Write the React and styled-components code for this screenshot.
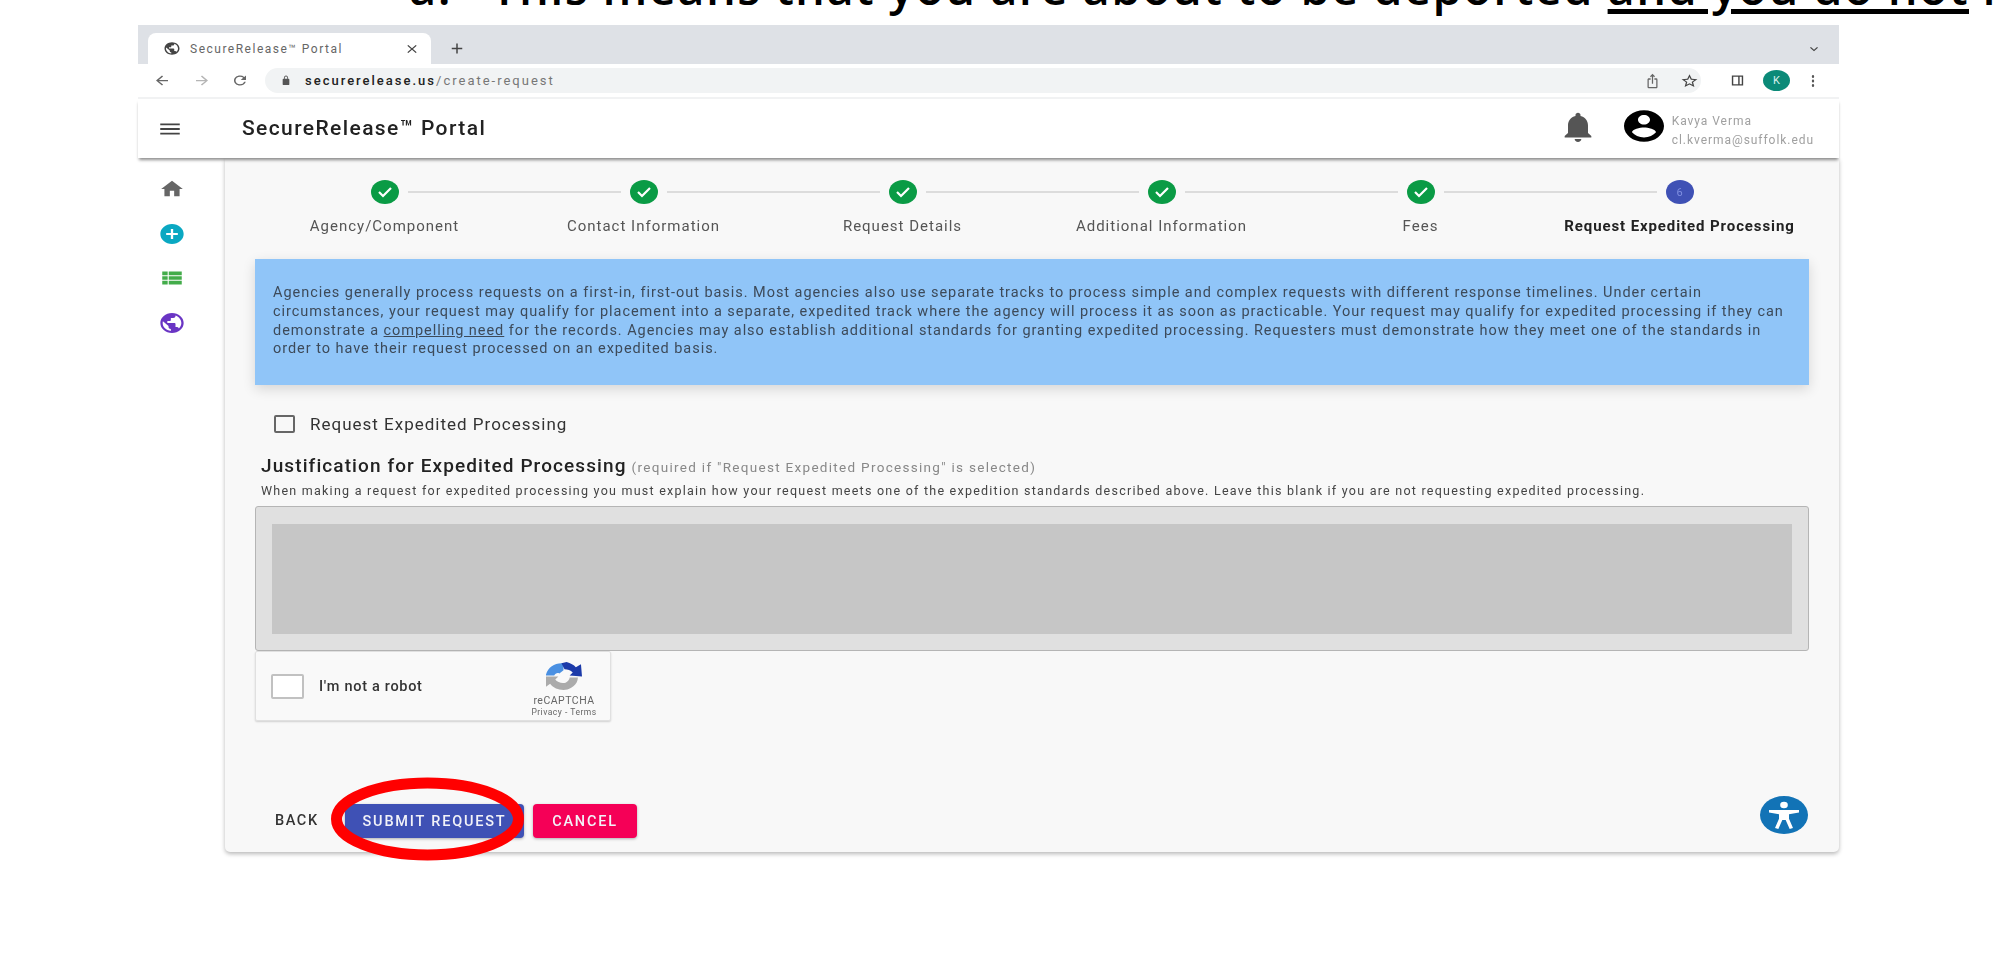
import React from "react"
import styled, { createGlobalStyle } from "styled-components"

const GlobalStyle = createGlobalStyle`
  html, body {
    margin: 0;
    padding: 0;
    background: #fff;
    overflow: hidden;
  }
  * { box-sizing: border-box; }
`

const Page = styled.div`
  width: 2000px;
  height: 970px;
  overflow: hidden;
  background: #fff;
  font-family: Roboto, "Liberation Sans", sans-serif;
`

const Caption = styled.div`
  height: 25px;
  overflow: hidden;
  padding-left: 409px;
  white-space: nowrap;
  font-family: "Open Sans", "Noto Sans", sans-serif;
  font-size: 47px;
  font-weight: 600;
  letter-spacing: 1.4px;
  line-height: 60px;
  color: #000;
  display: flex;
  align-items: flex-start;
`

const CaptionLine = styled.div`
  margin-top: -43px;
  display: flex;
`

const CaptionMark = styled.span`
  width: 82px;
`

const CaptionStrong = styled.span`
  text-decoration: underline;
  text-decoration-thickness: 5px;
  text-underline-offset: 4px;
`

const Window = styled.div`
  margin-left: 138px;
  width: 1701px;
  height: 827px;
  filter: blur(0.7px);
`

const TabStrip = styled.div`
  height: 39px;
  background: #dee1e6;
  padding: 8px 17px 0 10px;
  display: flex;
  align-items: stretch;
`

const Tab = styled.div`
  width: 283px;
  background: #fff;
  border-radius: 8px 8px 0 0;
  padding: 0 11px 0 15px;
  display: flex;
  align-items: center;
  gap: 9px;
  font-size: 12px;
  letter-spacing: 1.5px;
  color: #666;
  white-space: nowrap;
`

const TabTitle = styled.span`
  flex: 1;
`

const TabPlus = styled.div`
  margin-left: 17px;
  width: 18px;
  display: flex;
  align-items: center;
`

const TabChevron = styled.div`
  margin-left: auto;
  display: flex;
  align-items: center;
`

const Toolbar = styled.div`
  height: 35px;
  background: #fff;
  border-bottom: 2px solid #f1f2f3;
  padding: 4px 0 4px 15px;
  display: flex;
  align-items: center;
`

const NavButton = styled.div`
  width: ${(p) => p.$w}px;
  margin-left: ${(p) => p.$ml || 0}px;
  display: flex;
  align-items: center;
`

const Omnibox = styled.div`
  width: 1436px;
  height: 25px;
  margin-left: 14px;
  background: #f1f3f4;
  border-radius: 13px;
  padding: 0 2px 0 16px;
  display: flex;
  align-items: center;
  font-size: 13px;
  letter-spacing: 2px;
  color: #777;
  white-space: nowrap;
`

const Host = styled.span`
  color: #222;
  font-weight: 500;
  margin-left: 14px;
`

const OmniActions = styled.div`
  margin-left: auto;
  display: flex;
  align-items: center;
  gap: 20px;
`

const Avatar = styled.div`
  width: 27px;
  height: 21px;
  border-radius: 50%;
  background: #0b8a78;
  color: #d8f0ec;
  font-size: 11px;
  display: flex;
  align-items: center;
  justify-content: center;
  margin-left: 16px;
  margin-right: 16px;
`

const AppBar = styled.header`
  height: 59px;
  background: #fff;
  padding: 0 25px 0 19px;
  display: flex;
  align-items: center;
  box-shadow: 0 3px 3px -1px rgba(0, 0, 0, 0.45);
  position: relative;
  z-index: 2;
`

const AppTitle = styled.div`
  margin-left: 59px;
  margin-bottom: 1px;
  font-size: 21px;
  font-weight: 500;
  letter-spacing: 1.4px;
  color: #222;
  white-space: nowrap;
`

const AppUser = styled.div`
  margin-left: auto;
  display: flex;
  align-items: center;
`

const BellIcon = styled.div`
  margin-bottom: 4px;
  display: flex;
`

const UserIcon = styled.div`
  margin-left: 22px;
  margin-bottom: 5px;
  display: flex;
`

const UserText = styled.div`
  margin-left: 4px;
  display: flex;
  flex-direction: column;
  gap: 6px;
  font-size: 12px;
  line-height: 13px;
  letter-spacing: 0.95px;
  color: #a0a0a0;
  padding-top: 4px;
  white-space: nowrap;
`

const Body = styled.div`
  display: flex;
  height: 694px;
`

const Sidebar = styled.nav`
  width: 87px;
  flex: none;
  background: #fff;
  padding: 9px 20px 0 0;
  display: flex;
  flex-direction: column;
  align-items: center;
`

const SideItem = styled.div`
  height: 44.5px;
  display: flex;
  align-items: center;
  justify-content: center;
`

const Main = styled.main`
  flex: 1;
  min-width: 0;
  background: #f8f8f8;
  border-radius: 0 0 5px 5px;
  box-shadow: 0 2px 4px rgba(0, 0, 0, 0.28);
  padding: 22px 30px 0;
  display: flex;
  flex-direction: column;
`

const Stepper = styled.div`
  display: grid;
  grid-template-columns: repeat(6, 1fr);
`

const Step = styled.div`
  display: flex;
  flex-direction: column;
  align-items: center;
`

const StepTrack = styled.div`
  width: 100%;
  height: 24px;
  display: flex;
  align-items: center;
`

const Connector = styled.div`
  flex: 1;
  height: 2px;
  background: ${(p) => (p.$hidden ? "transparent" : "#dcdcdc")};
`

const StepDot = styled.div`
  width: 28px;
  height: 24px;
  margin: 0 9px;
  flex: none;
  border-radius: 50%;
  background: ${(p) => (p.$active ? "#3f51b5" : "#0a9b45")};
  color: #7f8fe0;
  font-size: 11px;
  display: flex;
  align-items: center;
  justify-content: center;
`

const StepLabel = styled.div`
  margin-top: 13px;
  font-size: 15px;
  line-height: 18px;
  letter-spacing: ${(p) => (p.$active ? 0.9 : 1)}px;
  white-space: nowrap;
  color: ${(p) => (p.$active ? "#222" : "#555")};
  font-weight: ${(p) => (p.$active ? 700 : 400)};
`

const InfoBox = styled.div`
  margin-top: 24px;
  height: 126px;
  background: #90c5f8;
  box-shadow: 0 4px 12px rgba(0, 0, 0, 0.14);
  padding: 25px 18px 0;
  font-size: 14.5px;
  line-height: 18.8px;
  letter-spacing: 0.96px;
  white-space: nowrap;
  color: #3d4a59;
`

const CheckRow = styled.div`
  margin-top: 30px;
  padding-left: 19px;
  display: flex;
  align-items: center;
  gap: 15px;
  font-size: 17px;
  line-height: 18px;
  letter-spacing: 1px;
  color: #333;
`

const CheckBox = styled.div`
  width: 21px;
  height: 18px;
  border: 2px solid #666;
  border-radius: 2px;
`

const FieldTitle = styled.div`
  margin-top: 22px;
  padding-left: 6px;
  white-space: nowrap;
  font-size: 19px;
  line-height: 22px;
  font-weight: 500;
  letter-spacing: 1.1px;
  color: #222;
`

const FieldHint = styled.span`
  margin-left: 5px;
  font-size: 13.5px;
  font-weight: 400;
  letter-spacing: 1.3px;
  color: #888;
`

const FieldHelp = styled.div`
  margin-top: 6px;
  padding-left: 6px;
  white-space: nowrap;
  font-size: 12.5px;
  line-height: 14px;
  letter-spacing: 1.24px;
  color: #444;
`

const TextArea = styled.div`
  margin-top: 8px;
  height: 145px;
  background: #e0e0e0;
  border: 1px solid #b5b5b5;
  border-radius: 3px;
  padding: 17px 16px;
`

const TextAreaFill = styled.div`
  height: 110px;
  background: #c6c6c6;
`

const Captcha = styled.div`
  width: 356px;
  height: 70px;
  background: #f9f9f9;
  border: 1px solid #e0e0e0;
  box-shadow: 0 1px 2px rgba(0, 0, 0, 0.16);
  border-radius: 2px;
  padding: 0 7px 0 15px;
  display: flex;
  align-items: center;
`

const CaptchaBox = styled.div`
  width: 33px;
  height: 25px;
  background: #fff;
  border: 2px solid #c1c1c1;
  border-radius: 2px;
`

const CaptchaText = styled.div`
  margin-left: 15px;
  font-size: 14.5px;
  font-weight: 500;
  letter-spacing: 0.7px;
  color: #333;
`

const CaptchaBrand = styled.div`
  margin-left: auto;
  width: 78px;
  align-self: flex-start;
  display: flex;
  flex-direction: column;
  align-items: center;
  padding-top: 10px;
  font-size: 10.5px;
  line-height: 12px;
  letter-spacing: 0.5px;
  color: #666;
  white-space: nowrap;
`

const CaptchaName = styled.div`
  margin-top: 5px;
`

const CaptchaTerms = styled.div`
  font-size: 8.5px;
  line-height: 11px;
`

const Actions = styled.div`
  margin-top: auto;
  margin-bottom: 14px;
  display: flex;
  align-items: flex-end;
`

const BackButton = styled.div`
  margin-left: 20px;
  width: 70px;
  height: 34px;
  line-height: 34px;
  font-size: 14.5px;
  font-weight: 500;
  letter-spacing: 1.6px;
  color: #333;
`

const SubmitWrap = styled.div`
  position: relative;
`

const ActionButton = styled.div`
  height: 34px;
  width: ${(p) => p.$w}px;
  margin-right: 9px;
  background: ${(p) => p.$color};
  border-radius: 4px;
  box-shadow: 0 1px 3px rgba(0, 0, 0, 0.3);
  display: flex;
  align-items: center;
  justify-content: center;
  font-size: 14.5px;
  font-weight: 500;
  letter-spacing: 1.8px;
  color: #f2f2f8;
  white-space: nowrap;
`

const Ring = styled.svg`
  position: absolute;
  left: -15px;
  top: -27px;
  width: 195px;
  height: 84px;
  pointer-events: none;
`

const A11yBadge = styled.div`
  margin-left: auto;
  margin-right: 1px;
  margin-bottom: 4px;
  width: 48px;
  height: 38px;
  border-radius: 50%;
  background: #1273b6;
  display: flex;
  align-items: center;
  justify-content: center;
`

const Ico = ({ w, h, d, color = "currentColor" }) => (
  <svg width={w} height={h} viewBox="0 0 24 24" preserveAspectRatio="none" fill={color}>
    <path d={d} />
  </svg>
)

const icons = {
  home: "M10 20v-6h4v6h5v-8h3L12 3 2 12h3v8z",
  add: "M12 2C6.48 2 2 6.48 2 12s4.48 10 10 10 10-4.48 10-10S17.52 2 12 2zm5 11h-4v4h-2v-4H7v-2h4V7h2v4h4v2z",
  list: "M3 14h5v-4H3v4zm0 5h5v-4H3v4zM3 9h5V5H3v4zm6 5h12v-4H9v4zm0 5h12v-4H9v4zM9 5v4h12V5H9z",
  globe: "M12 2C6.48 2 2 6.48 2 12s4.48 10 10 10 10-4.48 10-10S17.52 2 12 2zm-1 17.93c-3.95-.49-7-3.85-7-7.93 0-.62.08-1.21.21-1.79L9 15v1c0 1.1.9 2 2 2v1.93zm6.9-2.54c-.26-.81-1-1.39-1.9-1.39h-1v-3c0-.55-.45-1-1-1H8v-2h2c.55 0 1-.45 1-1V7h2c1.1 0 2-.9 2-2v-.41c2.93 1.19 5 4.06 5 7.41 0 2.08-.8 3.97-2.1 5.39z",
  bell: "M12 22c1.1 0 2-.9 2-2h-4c0 1.1.89 2 2 2zm6-6v-5c0-3.07-1.64-5.64-4.5-6.32V4c0-.83-.67-1.5-1.5-1.5s-1.5.67-1.5 1.5v.68C7.63 5.36 6 7.92 6 11v5l-2 2v1h16v-1l-2-2z",
  account: "M12 2C6.48 2 2 6.48 2 12s4.48 10 10 10 10-4.48 10-10S17.52 2 12 2zm0 3c1.66 0 3 1.34 3 3s-1.34 3-3 3-3-1.34-3-3 1.34-3 3-3zm0 14.2c-2.5 0-4.71-1.28-6-3.22.03-1.99 4-3.08 6-3.08 1.99 0 5.97 1.09 6 3.08-1.29 1.94-3.5 3.22-6 3.22z",
  person: "M12 2.6a2.3 2.3 0 1 1 0 4.6 2.3 2.3 0 0 1 0-4.6zM3 8.4h18v1.8l-6 1.2v3.2l2.4 6.6-2 .7-2.4-6.4h-2l-2.4 6.4-2-.7L9 14.6v-3.2l-6-1.2z",
  menu: "M3 18h18v-2H3v2zm0-5h18v-2H3v2zm0-7v2h18V6H3z",
  lock: "M18 8h-1V6c0-2.76-2.24-5-5-5S7 3.24 7 6v2H6c-1.1 0-2 .9-2 2v10c0 1.1.9 2 2 2h12c1.1 0 2-.9 2-2V10c0-1.1-.9-2-2-2zM9 6c0-1.66 1.34-3 3-3s3 1.34 3 3v2H9V6z",
  back: "M20 11H7.83l5.59-5.59L12 4l-8 8 8 8 1.41-1.41L7.83 13H20v-2z",
  forward: "M12 4l-1.41 1.41L16.17 11H4v2h12.17l-5.58 5.59L12 20l8-8z",
  reload: "M17.65 6.35A7.958 7.958 0 0 0 12 4c-4.42 0-7.99 3.58-7.99 8s3.57 8 7.99 8c3.73 0 6.84-2.55 7.73-6h-2.08A5.99 5.99 0 0 1 12 18c-3.31 0-6-2.69-6-6s2.69-6 6-6c1.66 0 3.14.69 4.22 1.78L13 11h7V4l-2.35 2.35z",
  star: "M22 9.24l-7.19-.62L12 2 9.19 8.63 2 9.24l5.46 4.73L5.82 21 12 17.27 18.18 21l-1.63-7.03L22 9.24zM12 15.4l-3.76 2.27 1-4.28-3.32-2.88 4.38-.38L12 6.1l1.71 4.04 4.38.38-3.32 2.88 1 4.28L12 15.4z",
  share: "M16 5l-1.42 1.42-1.59-1.59V16h-2V4.83L9.42 6.42 8 5l4-4 4 4zm4 5v11c0 1.1-.9 2-2 2H6a2 2 0 0 1-2-2V10c0-1.11.89-2 2-2h3v2H6v11h12V10h-3V8h3a2 2 0 0 1 2 2z",
  panel: "M4 4h16v16H4V4zm2 2v12h7V6H6zm9 0v12h3V6h-3z",
  dots: "M12 8c1.1 0 2-.9 2-2s-.9-2-2-2-2 .9-2 2 .9 2 2 2zm0 2c-1.1 0-2 .9-2 2s.9 2 2 2 2-.9 2-2-.9-2-2-2zm0 6c-1.1 0-2 .9-2 2s.9 2 2 2 2-.9 2-2-.9-2-2-2z",
  close: "M19 6.41L17.59 5 12 10.59 6.41 5 5 6.41 10.59 12 5 17.59 6.41 19 12 13.41 17.59 19 19 17.59 13.41 12z",
  plus: "M19 13h-6v6h-2v-6H5v-2h6V5h2v6h6v2z",
  chevron: "M7.41 8.59L12 13.17l4.59-4.58L18 10l-6 6-6-6z",
}

const Check = () => (
  <svg width="16" height="12" viewBox="0 0 16 12" fill="none" stroke="#fff" strokeWidth="2.2">
    <path d="M2 6l4 4 8-8" />
  </svg>
)

const RecaptchaLogo = () => (
  <svg width="36" height="28" viewBox="0 0 35 27">
    <path fill="#4a90e2" d="M0 12C2 5 8 1 15 1l2 0 0 7-4 3c-2-1-4 0-5 2L0 13z" />
    <path fill="#1c3aa9" d="M15 1l5-1c4 1 7 3 9 5l5-3 1 12-12-1 3-3c-2-2-5-3-8-3z" />
    <path fill="#ababab" d="M0 14h12l-3 3c2 3 7 4 10 3 2-1 4-3 4-5h8c0 7-7 12-14 12-5 0-10-2-13-6l-4 3z" />
  </svg>
)

const steps = [
  "Agency/Component",
  "Contact Information",
  "Request Details",
  "Additional Information",
  "Fees",
  "Request Expedited Processing",
]

const App = () => (
  <Page>
    <GlobalStyle />
    <Caption>
      <CaptionLine>
        <CaptionMark>a.</CaptionMark>
        <span>
          This means that you are about to be deported{" "}
          <CaptionStrong>and you do not</CaptionStrong> have
        </span>
      </CaptionLine>
    </Caption>

    <Window>
      <TabStrip>
        <Tab>
          <Ico w={18} h={15} d={icons.globe} color="#444" />
          <TabTitle>SecureRelease™ Portal</TabTitle>
          <Ico w={16} h={14} d={icons.close} color="#444" />
        </Tab>
        <TabPlus>
          <Ico w={20} h={17} d={icons.plus} color="#444" />
        </TabPlus>
        <TabChevron>
          <Ico w={16} h={14} d={icons.chevron} color="#444" />
        </TabChevron>
      </TabStrip>

      <Toolbar>
        <NavButton $w={40}><Ico w={18} h={15} d={icons.back} color="#666" /></NavButton>
        <NavButton $w={38}><Ico w={18} h={15} d={icons.forward} color="#b5b5b5" /></NavButton>
        <NavButton $w={20}><Ico w={18} h={15} d={icons.reload} color="#666" /></NavButton>
        <Omnibox>
          <Ico w={10} h={11} d={icons.lock} color="#555" />
          <Host>securerelease.us</Host>/create-request
          <OmniActions>
            <Ico w={15} h={16} d={icons.share} color="#666" />
            <Ico w={19} h={16} d={icons.star} color="#444" />
          </OmniActions>
        </Omnibox>
        <NavButton $w={18} $ml={28}><Ico w={17} h={15} d={icons.panel} color="#444" /></NavButton>
        <Avatar>K</Avatar>
        <Ico w={14} h={18} d={icons.dots} color="#555" />
      </Toolbar>

      <AppBar>
        <Ico w={26} h={22} d={icons.menu} color="#444" />
        <AppTitle>SecureRelease™ Portal</AppTitle>
        <AppUser>
          <BellIcon>
            <Ico w={40} h={36} d={icons.bell} color="#555" />
          </BellIcon>
          <UserIcon>
            <Ico w={48} h={38} d={icons.account} color="#000" />
          </UserIcon>
          <UserText>
            <span>Kavya Verma</span>
            <span>cl.kverma@suffolk.edu</span>
          </UserText>
        </AppUser>
      </AppBar>

      <Body>
        <Sidebar>
          <SideItem><Ico w={26} h={22} d={icons.home} color="#666" /></SideItem>
          <SideItem><Ico w={28} h={24} d={icons.add} color="#0aa8c2" /></SideItem>
          <SideItem><Ico w={26} h={22} d={icons.list} color="#43ac4a" /></SideItem>
          <SideItem><Ico w={28} h={24} d={icons.globe} color="#6a35c4" /></SideItem>
        </Sidebar>

        <Main>
          <Stepper>
            {steps.map((label, i) => (
              <Step key={label}>
                <StepTrack>
                  <Connector $hidden={i === 0} />
                  <StepDot $active={i === 5}>{i === 5 ? "6" : <Check />}</StepDot>
                  <Connector $hidden={i === 5} />
                </StepTrack>
                <StepLabel $active={i === 5}>{label}</StepLabel>
              </Step>
            ))}
          </Stepper>

          <InfoBox>
            Agencies generally process requests on a first-in, first-out basis. Most agencies also use separate tracks to process simple and complex requests with different response timelines. Under certain<br />
            circumstances, your request may qualify for placement into a separate, expedited track where the agency will process it as soon as practicable. Your request may qualify for expedited processing if they can<br />
            demonstrate a <u>compelling need</u> for the records. Agencies may also establish additional standards for granting expedited processing. Requesters must demonstrate how they meet one of the standards in<br />
            order to have their request processed on an expedited basis.
          </InfoBox>

          <CheckRow>
            <CheckBox />
            Request Expedited Processing
          </CheckRow>

          <FieldTitle>
            Justification for Expedited Processing
            <FieldHint>(required if "Request Expedited Processing" is selected)</FieldHint>
          </FieldTitle>
          <FieldHelp>
            When making a request for expedited processing you must explain how your request meets one of the expedition standards described above. Leave this blank if you are not requesting expedited processing.
          </FieldHelp>

          <TextArea>
            <TextAreaFill />
          </TextArea>

          <Captcha>
            <CaptchaBox />
            <CaptchaText>I'm not a robot</CaptchaText>
            <CaptchaBrand>
              <RecaptchaLogo />
              <CaptchaName>reCAPTCHA</CaptchaName>
              <CaptchaTerms>Privacy - Terms</CaptchaTerms>
            </CaptchaBrand>
          </Captcha>

          <Actions>
            <BackButton>BACK</BackButton>
            <SubmitWrap>
              <ActionButton $w={179} $color="#3f51b5">SUBMIT REQUEST</ActionButton>
              <Ring viewBox="0 0 195 84">
                <ellipse cx="97.5" cy="42" rx="91" ry="36" fill="none" stroke="#f00" strokeWidth="11" />
              </Ring>
            </SubmitWrap>
            <ActionButton $w={104} $color="#f50057">CANCEL</ActionButton>
            <A11yBadge>
              <Ico w={40} h={34} d={icons.person} color="#fff" />
            </A11yBadge>
          </Actions>
        </Main>
      </Body>
    </Window>
  </Page>
)

export default App
